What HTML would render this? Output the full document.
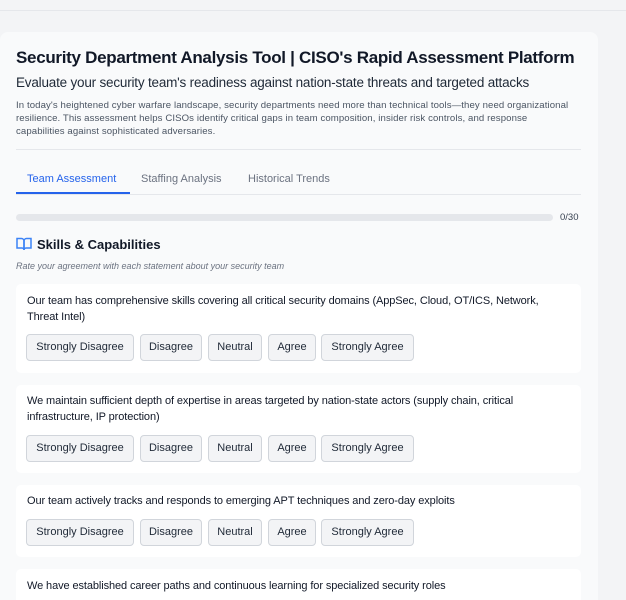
<!DOCTYPE html>
<html style="width:626px;height:600px;overflow:hidden"><head><meta charset="utf-8"><style>
*{box-sizing:border-box;margin:0;padding:0}
body{width:626px;height:600px;overflow:hidden;background:#f3f4f6;font-family:"Liberation Sans",sans-serif;color:#111827;position:relative}
.top{position:absolute;left:0;top:0;width:626px;height:11px;background:#f3f4f6;border-bottom:1px solid #e5e7eb}
.card{position:absolute;left:0;top:32px;width:598px;height:568px;background:#f9fafb;border-radius:8px 8px 0 0}
.a{position:absolute;white-space:nowrap}
h1{font-size:17px;font-weight:bold;letter-spacing:-0.3px}
.sub{font-size:13.5px;color:#1f2937;letter-spacing:-0.2px}
.p{font-size:9.6px;color:#4b5563;line-height:13px;white-space:nowrap;letter-spacing:0.1px}
.hr{position:absolute;left:16px;width:565px;height:1px;background:#e5e7eb}
.tab{font-size:11px;color:#6b7280}
.q{position:absolute;left:16px;width:565px;background:#fff;border-radius:5px}
.qt{position:absolute;left:11px;font-size:11px;line-height:16px;width:545px;color:#111827;letter-spacing:-0.1px}
.btn{position:absolute;height:27px;background:#f3f4f6;border:1px solid #d1d5db;border-radius:4px;font-size:11px;line-height:25px;text-align:center;color:#1f2937}
</style></head><body>
<div class="top"></div>
<div class="card"></div>
<h1 class="a" style="left:16px;top:48px">Security Department Analysis Tool | CISO's Rapid Assessment Platform</h1>
<div class="a sub" style="left:16px;top:75px">Evaluate your security team's readiness against nation-state threats and targeted attacks</div>
<div class="a p" style="left:16px;top:99px">In today's heightened cyber warfare landscape, security departments need more than technical tools—they need organizational<br>resilience. This assessment helps CISOs identify critical gaps in team composition, insider risk controls, and response<br>capabilities against sophisticated adversaries.</div>
<div class="hr" style="top:149px"></div>
<div class="a tab" style="left:27px;top:173px;color:#2563eb">Team Assessment</div>
<div class="a tab" style="left:141px;top:173px">Staffing Analysis</div>
<div class="a tab" style="left:248px;top:173px">Historical Trends</div>
<div class="hr" style="top:194px"></div>
<div style="position:absolute;left:16px;top:192px;width:114px;height:2px;background:#2563eb"></div>
<div style="position:absolute;left:16px;top:214px;width:537px;height:7px;background:#e5e7eb;border-radius:4px"></div>
<div class="a" style="left:560px;top:212px;font-size:9.5px;color:#374151">0/30</div>
<svg class="a" style="left:16px;top:237px" width="16" height="14" viewBox="0 0 16 14" fill="none" stroke="#3b82f6" stroke-width="1.5"><path d="M1 1.5h4.5a2.5 2.5 0 0 1 2.5 2.5v9a2 2 0 0 0-2-2H1z"/><path d="M15 1.5h-4.5A2.5 2.5 0 0 0 8 4v9a2 2 0 0 1 2-2h5z"/></svg>
<div class="a" style="left:37px;top:237px;font-size:13px;font-weight:bold">Skills &amp; Capabilities</div>
<div class="a" style="left:16px;top:261px;font-size:9px;font-style:italic;color:#6b7280">Rate your agreement with each statement about your security team</div>

<div class="q" style="top:284px;height:89px"><div class="qt" style="top:9px">Our team has comprehensive skills covering all critical security domains (AppSec, Cloud, OT/ICS, Network,<br>Threat Intel)</div></div>
<div class="q" style="top:385px;height:88px"><div class="qt" style="top:8px">We maintain sufficient depth of expertise in areas targeted by nation-state actors (supply chain, critical<br>infrastructure, IP protection)</div></div>
<div class="q" style="top:485px;height:72px"><div class="qt" style="top:8px">Our team actively tracks and responds to emerging APT techniques and zero-day exploits</div></div>
<div class="q" style="top:569px;height:31px;border-radius:5px 5px 0 0"><div class="qt" style="top:9px">We have established career paths and continuous learning for specialized security roles</div></div>

<div class="btn" style="left:26px;top:334px;width:108px">Strongly Disagree</div>
<div class="btn" style="left:140px;top:334px;width:62px">Disagree</div>
<div class="btn" style="left:208px;top:334px;width:54px">Neutral</div>
<div class="btn" style="left:268px;top:334px;width:48px">Agree</div>
<div class="btn" style="left:321px;top:334px;width:93px">Strongly Agree</div>

<div class="btn" style="left:26px;top:435px;width:108px">Strongly Disagree</div>
<div class="btn" style="left:140px;top:435px;width:62px">Disagree</div>
<div class="btn" style="left:208px;top:435px;width:54px">Neutral</div>
<div class="btn" style="left:268px;top:435px;width:48px">Agree</div>
<div class="btn" style="left:321px;top:435px;width:93px">Strongly Agree</div>

<div class="btn" style="left:26px;top:519px;width:108px">Strongly Disagree</div>
<div class="btn" style="left:140px;top:519px;width:62px">Disagree</div>
<div class="btn" style="left:208px;top:519px;width:54px">Neutral</div>
<div class="btn" style="left:268px;top:519px;width:48px">Agree</div>
<div class="btn" style="left:321px;top:519px;width:93px">Strongly Agree</div>
</body></html>
